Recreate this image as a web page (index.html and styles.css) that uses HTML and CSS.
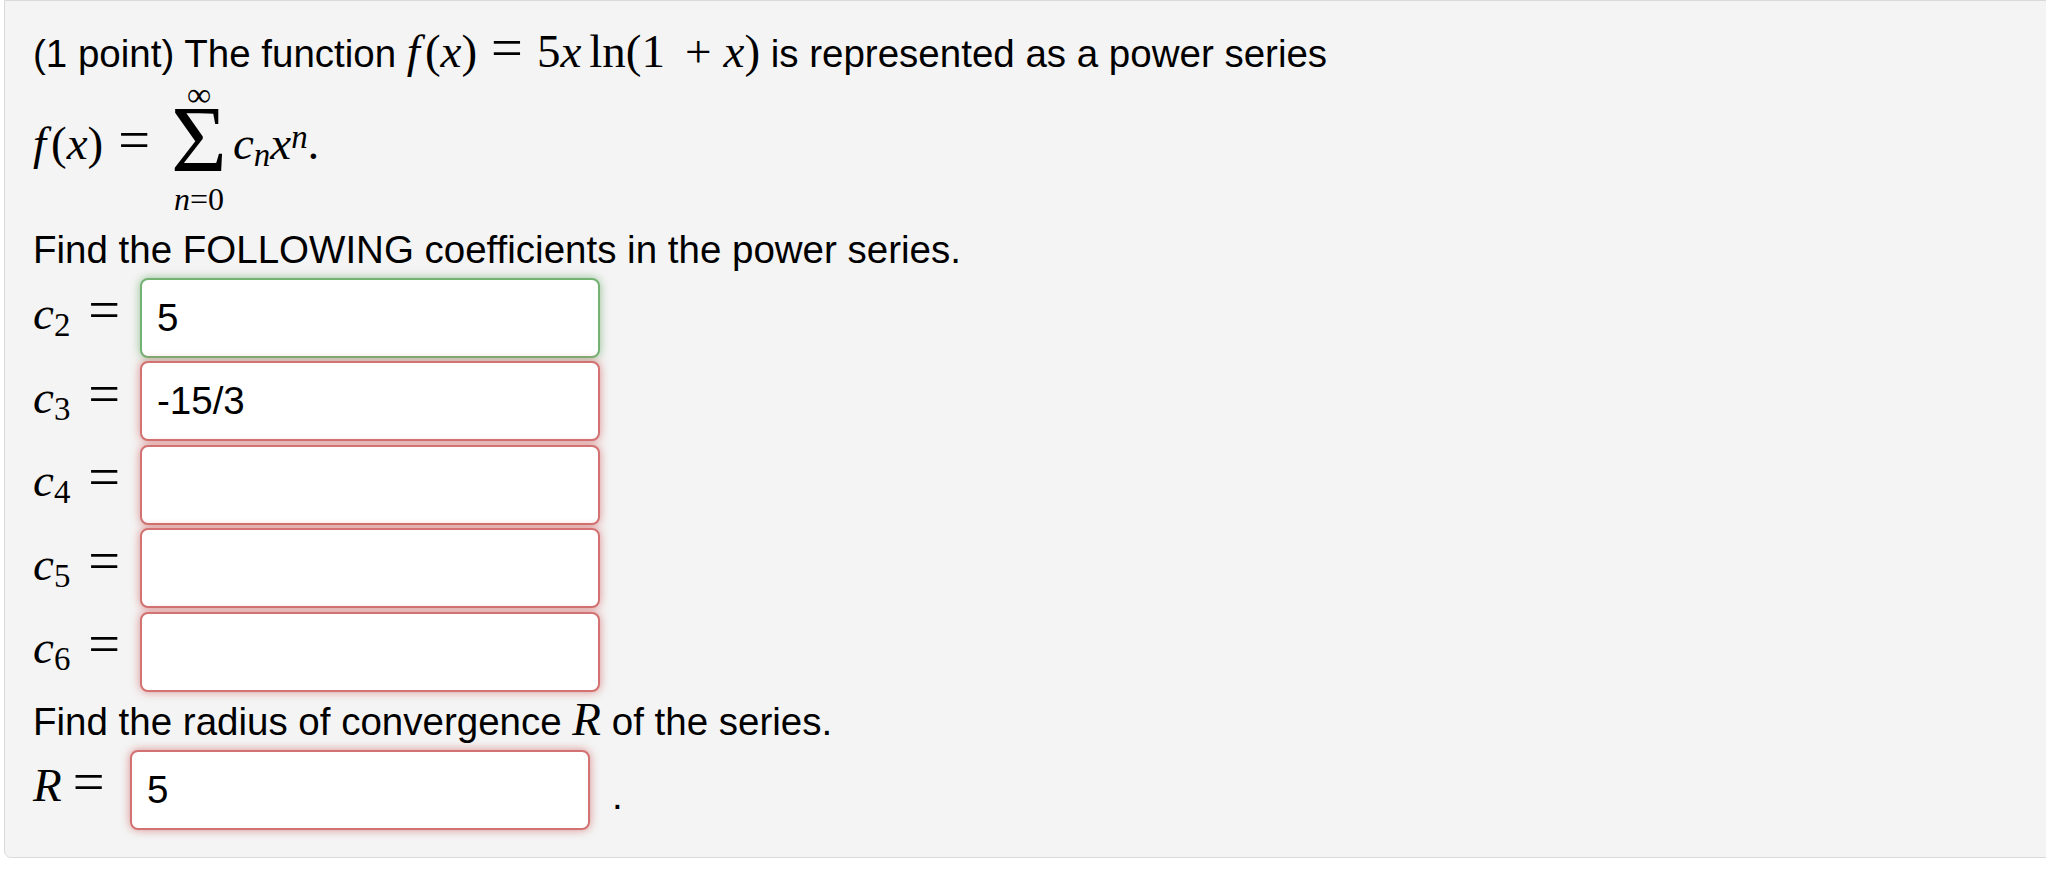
FILE: index.html
```html
<!DOCTYPE html>
<html lang="en">
<head>
  <meta charset="UTF-8" />
  <title>Power series problem</title>
  <link rel="stylesheet" href="styles.css">
</head>
<body>
  <div class="problem">
    <p class="line">(1 point) The function <span class="math"><i>f</i><span class="fn">(<i>x</i>)</span><span class="rel">=</span>5<i>x</i><span class="ln">ln</span>(1<span class="bin">+</span><i>x</i>)</span> is represented as a power series</p>

    <div class="display">
      <span class="math"><i>f</i><span class="fn">(<i>x</i>)</span><span class="rel">=</span></span>
      <span class="sum">
        <span class="over">∞</span>
        <span class="op">Σ</span>
        <span class="under"><i>n</i>=0</span>
      </span>
      <span class="math"><i>c</i><sub><i>n</i></sub><i>x</i><sup><i>n</i></sup>.</span>
    </div>

    <p class="line">Find the FOLLOWING coefficients in the power series.</p>

    <div class="answer">
      <span class="label math"><i>c</i><sub>2</sub><span class="rel">=</span></span>
      <input class="ans correct" type="text" value="5">
    </div>
    <div class="answer">
      <span class="label math"><i>c</i><sub>3</sub><span class="rel">=</span></span>
      <input class="ans wrong" type="text" value="-15/3">
    </div>
    <div class="answer">
      <span class="label math"><i>c</i><sub>4</sub><span class="rel">=</span></span>
      <input class="ans wrong" type="text" value="">
    </div>
    <div class="answer">
      <span class="label math"><i>c</i><sub>5</sub><span class="rel">=</span></span>
      <input class="ans wrong" type="text" value="">
    </div>
    <div class="answer">
      <span class="label math"><i>c</i><sub>6</sub><span class="rel">=</span></span>
      <input class="ans wrong" type="text" value="">
    </div>

    <p class="line radius">Find the radius of convergence <span class="math"><i>R</i></span> of the series.</p>

    <div class="answer last">
      <span class="label short math"><i>R</i><span class="rel">=</span></span>
      <input class="ans wrong" type="text" value="5">
      <span class="stop">.</span>
    </div>
  </div>
</body>
</html>
```

FILE: styles.css
```css
body {
  margin: 0;
  background: #ffffff;
  color: #000000;
  font-family: "Liberation Sans", Arial, sans-serif;
  font-size: 38.5px;
  overflow: hidden;
}

.problem {
  box-sizing: border-box;
  height: 858px;
  margin: 0 -20px 0 4px;
  padding: 29px 0 0 28px;
  background: #f4f4f4;
  border: 1px solid #dadada;
  border-radius: 0 0 0 7px;
}

.line {
  margin: 0;
  line-height: 48px;
}

.math {
  font-family: "Liberation Serif", "Times New Roman", serif;
  font-size: 47px;
  line-height: 0.9;
}

.math i {
  font-style: italic;
}

.fn {
  margin-left: 5px;
}

.rel {
  font-size: 1.2em;
  line-height: 0;
  margin: 0 14px;
}

.bin {
  margin: 0 12px 0 20px;
}

.ln {
  margin-left: 8px;
}

.math sub,
.math sup {
  font-size: 0.7em;
  line-height: 0;
}

.math sub {
  vertical-align: -0.22em;
}

.math sup {
  vertical-align: 0.32em;
}

/* displayed sum: f(x) = sum c_n x^n */
.display {
  display: flex;
  align-items: flex-start;
  height: 148px;
}

.display .math {
  margin-top: 44px;
}

.display .math .rel {
  margin: 0 0 0 15px;
}

.sum {
  display: flex;
  flex-direction: column;
  align-items: center;
  margin: 7px 6px 0 21px;
  font-family: "Liberation Serif", "Times New Roman", serif;
}

.sum .over {
  font-size: 34px;
  line-height: 20px;
}

.sum .op {
  font-size: 96px;
  line-height: 69.2px;
}

.sum .under {
  font-size: 32px;
  line-height: 50px;
}

.sum .under i {
  font-style: italic;
}

.answer {
  display: flex;
  align-items: center;
  margin-top: 3.5px;
}

.label {
  width: 107px;
  margin-bottom: 8px;
  white-space: nowrap;
}

.label .rel {
  margin: 0 0 0 18px;
}

.label.short {
  width: 97px;
}

.label.short .rel {
  margin-left: 11px;
}

.ans {
  box-sizing: border-box;
  width: 460px;
  height: 80px;
  padding: 0 15px;
  border: 2px solid;
  border-radius: 8px;
  background: #ffffff;
  color: #000000;
  font-family: "Liberation Sans", Arial, sans-serif;
  font-size: 38.5px;
  outline: none;
}

.correct {
  border-color: #74b274;
  box-shadow: 0 0 10px rgba(105, 170, 105, 0.7);
}

.wrong {
  border-color: #d27272;
  box-shadow: 0 0 10px rgba(210, 100, 100, 0.7);
}

.radius {
  margin-top: 6px;
}

.last {
  margin-top: 4px;
}

.stop {
  margin-left: 22px;
  margin-top: 12px;
}
```
